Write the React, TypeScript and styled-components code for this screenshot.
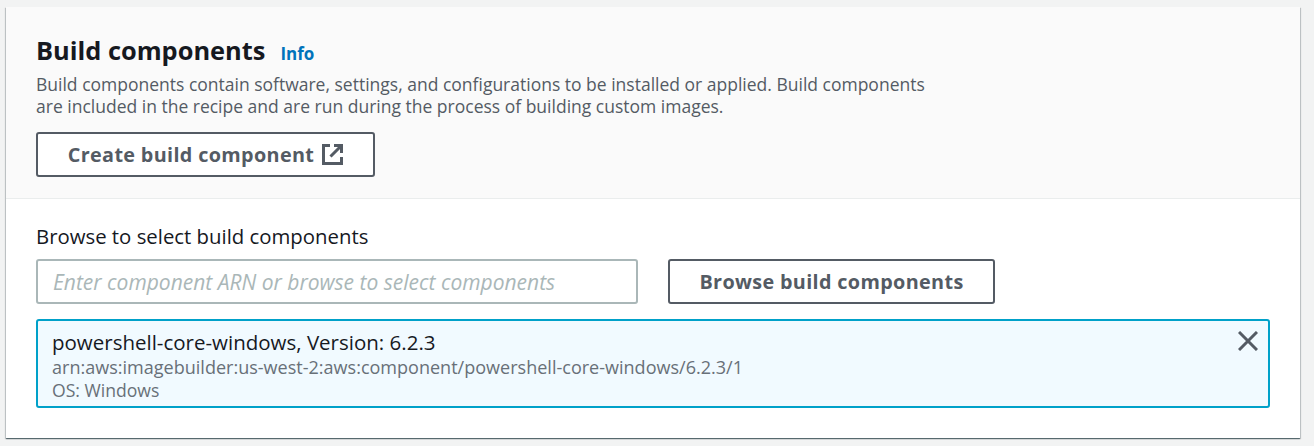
import React from 'react';
import styled, { createGlobalStyle } from 'styled-components';

const GlobalStyle = createGlobalStyle`
  html, body {
    margin: 0;
    padding: 0;
    background: #f2f3f3;
    font-family: "Open Sans", "Noto Sans", sans-serif;
  }
`;

const Page = styled.div`
  width: 1314px;
  height: 446px;
  box-sizing: border-box;
  padding: 7px 14px 0 6px;
  overflow: hidden;
`;

const Card = styled.section`
  height: 431px;
  box-sizing: border-box;
  background: #fff;
  box-shadow: 0 1px 1px 0 rgba(0, 28, 36, 0.5), 1px 1px 1px 0 rgba(0, 28, 36, 0.15), -1px 1px 1px 0 rgba(0, 28, 36, 0.15);
`;

const Header = styled.header`
  height: 192px;
  box-sizing: border-box;
  padding: 25px 30px 0;
  background: #fafafa;
  border-bottom: 1px solid #eaeded;
`;

const TitleRow = styled.div`
  display: flex;
  align-items: baseline;
  gap: 15px;
  height: 36px;
`;

const Title = styled.h2`
  margin: 0;
  font-size: 25.4px;
  line-height: 36px;
  font-weight: 700;
  color: #16191f;
`;

const InfoLink = styled.a`
  font-size: 17px;
  font-weight: 700;
  color: #0073bb;
`;

const Description = styled.p`
  margin: 5px 0 0;
  font-size: 17.5px;
  line-height: 22px;
  white-space: nowrap;
  color: #545b64;
`;

const Button = styled.button<{ $width: number }>`
  display: inline-flex;
  align-items: center;
  justify-content: center;
  gap: 8px;
  box-sizing: border-box;
  height: 45px;
  width: ${({ $width }) => $width}px;
  flex: none;
  padding: 0;
  background: #fff;
  border: 2px solid #545b64;
  border-radius: 3px;
  font-family: inherit;
  font-size: 19.8px;
  font-weight: 700;
  letter-spacing: 0.35px;
  color: #545b64;
`;

const CreateButton = styled(Button)`
  margin-top: 15px;
`;

const Body = styled.div`
  padding: 22px 30px 0;
`;

const FieldLabel = styled.label`
  display: block;
  font-size: 20.35px;
  line-height: 30px;
  color: #16191f;
`;

const FieldRow = styled.div`
  display: flex;
  gap: 30px;
  margin-top: 8px;
`;

const ArnInput = styled.input`
  box-sizing: border-box;
  width: 602px;
  height: 45px;
  padding: 0 15px;
  background: #fff;
  border: 2px solid #aab7b8;
  border-radius: 3px;
  font-family: inherit;
  font-size: 21px;

  &::placeholder {
    color: #aab7b8;
    font-style: italic;
    opacity: 1;
  }
`;

const Token = styled.div`
  display: flex;
  justify-content: space-between;
  box-sizing: border-box;
  height: 89px;
  margin-top: 15px;
  padding: 7px 10px 0 14px;
  background: #f1faff;
  border: 2px solid #00a1c9;
  border-radius: 3px;
`;

const TokenName = styled.div`
  font-size: 20.5px;
  line-height: 28px;
  color: #16191f;
`;

const TokenMeta = styled.div`
  font-size: 18.05px;
  line-height: 23px;
  color: #687078;
`;

const TokenOs = styled(TokenMeta)`
  font-size: 17.6px;
`;

const DismissIcon = styled.svg`
  flex: none;
  width: 20px;
  height: 20px;
  margin-top: 3px;
  fill: none;
  stroke: #545b64;
  stroke-width: 3;
`;

const ExternalIcon = styled.svg`
  flex: none;
  width: 21px;
  height: 21px;
  fill: none;
  stroke: #545b64;
  stroke-width: 3;
`;

export default function App() {
  return (
    <>
      <GlobalStyle />
      <Page>
        <Card>
          <Header>
            <TitleRow>
              <Title>Build components</Title>
              <InfoLink>Info</InfoLink>
            </TitleRow>
            <Description>
              Build components contain software, settings, and configurations to be installed or applied. Build components
              <br />
              are included in the recipe and are run during the process of building custom images.
            </Description>
            <CreateButton $width={339}>
              Create build component
              <ExternalIcon viewBox="0 0 21 21">
                <path d="M8 1.5H1.5v18h18V13" />
                <path d="M12 1.5h7.5V9" />
                <path d="M19 2L8.5 12.5" />
              </ExternalIcon>
            </CreateButton>
          </Header>
          <Body>
            <FieldLabel>Browse to select build components</FieldLabel>
            <FieldRow>
              <ArnInput placeholder="Enter component ARN or browse to select components" />
              <Button $width={327}>Browse build components</Button>
            </FieldRow>
            <Token>
              <div>
                <TokenName>powershell-core-windows, Version: 6.2.3</TokenName>
                <TokenMeta>arn:aws:imagebuilder:us-west-2:aws:component/powershell-core-windows/6.2.3/1</TokenMeta>
                <TokenOs>OS: Windows</TokenOs>
              </div>
              <DismissIcon viewBox="0 0 20 20">
                <path d="M1 1l18 18M19 1L1 19" />
              </DismissIcon>
            </Token>
          </Body>
        </Card>
      </Page>
    </>
  );
}
